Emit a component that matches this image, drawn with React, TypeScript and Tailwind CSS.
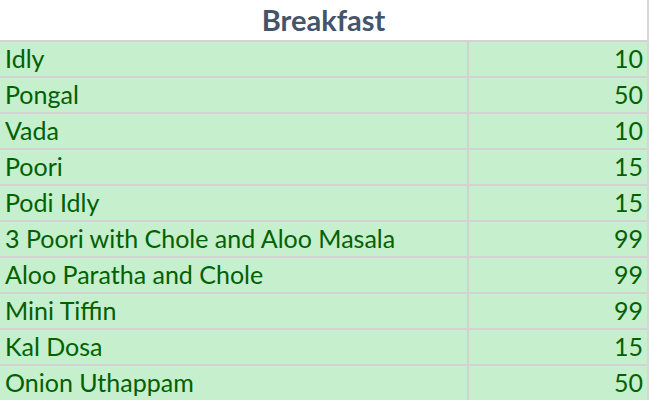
import React from "react";

const rows: [string, string][] = [
  ["Idly", "10"],
  ["Pongal", "50"],
  ["Vada", "10"],
  ["Poori", "15"],
  ["Podi Idly", "15"],
  ["3 Poori with Chole and Aloo Masala", "99"],
  ["Aloo Paratha and Chole", "99"],
  ["Mini Tiffin", "99"],
  ["Kal Dosa", "15"],
  ["Onion Uthappam", "50"],
];

export default function App() {
  return (
    <div className="w-[650px] h-[400px] overflow-hidden bg-white" style={{ fontFamily: "Lato, 'Open Sans', sans-serif" }}>
      <div className="w-[649px] border-r-2 border-[#d6d6d6]">
        <div className="h-[42px] flex items-center justify-center border-b-2 border-[#d2d2d2] text-[29px] font-bold text-[#44546a] bg-white">
          Breakfast
        </div>
        {rows.map(([name, price]) => (
          <div key={name} className="grid grid-cols-[469px_1fr] h-[36px] border-b-2 border-[#d2d2d2] bg-[#c6efce] text-[#006100] text-[25px] leading-none">
            <div className="border-r-2 border-[#d2d2d2] pl-[5px] pb-[1px] flex items-center">{name}</div>
            <div className="pr-[4px] pb-[1px] flex items-center justify-end">{price}</div>
          </div>
        ))}
      </div>
    </div>
  );
}
